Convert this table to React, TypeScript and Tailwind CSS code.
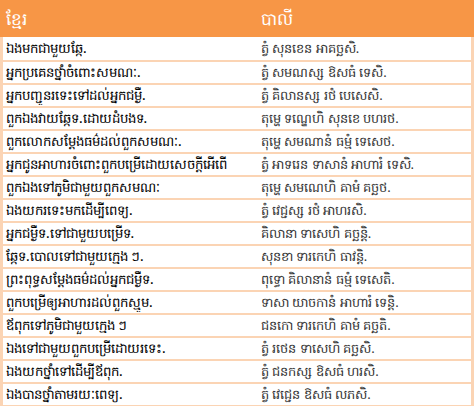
const rows: [string, string][] = [
  ["ឯងមកជាមួយឆ្កែ.", "ត្វំ សុនខេន អាគច្ឆសិ."],
  ["អ្នកប្រគេនថ្នាំចំពោះសមណៈ.", "ត្វំ សមណស្ស ឱសធំ ទេសិ."],
  ["អ្នកបញ្ជូនរទេះទៅដល់អ្នកជម្ងឺ.", "ត្វំ គិលានស្ស រថំ បេសេសិ."],
  ["ពួកឯងវាយឆ្កែទ.ដោយដំបងទ.", "តុម្ហេ ទណ្ឌេហិ សុនខេ បហរថ."],
  ["ពួកលោកសម្តែងធម៌ដល់ពួកសមណៈ.", "តុម្ហេ សមណានំ ធម្មំ ទេសេថ."],
  ["អ្នកជូនអាហារចំពោះពួកបម្រើដោយសេចក្តីអើពើ", "ត្វំ អាទរេន ទាសានំ អាហារំ ទេសិ."],
  ["ពួកឯងទៅភូមិជាមួយពួកសមណៈ", "តុម្ហេ សមណេហិ គាមំ គច្ឆថ."],
  ["ឯងយករទេះមកដើម្បីពេទ្យ.", "ត្វំ វេជ្ជស្ស រថំ អាហរសិ."],
  ["អ្នកជម្ងឺទ.ទៅជាមួយបម្រើទ.", "គិលានា ទាសេហិ គច្ឆន្តិ."],
  ["ឆ្កែទ.បោលទៅជាមួយក្មេង ៗ.", "សុនខា ទារកេហិ ធាវន្តិ."],
  ["ព្រះពុទ្ធសម្តែងធម៌ដល់អ្នកជម្ងឺទ.", "ពុទ្ធោ គិលានានំ ធម្មំ ទេសេតិ."],
  ["ពួកបម្រើឲ្យអាហារដល់ពួកស្មូម.", "ទាសា យាចកានំ អាហារំ ទេន្តិ."],
  ["ឪពុកទៅភូមិជាមួយក្មេង ៗ", "ជនកោ ទារកេហិ គាមំ គច្ឆតិ."],
  ["ឯងទៅជាមួយពួកបម្រើដោយរទេះ.", "ត្វំ រថេន ទាសេហិ គច្ឆសិ."],
  ["ឯងយកថ្នាំទៅដើម្បីឪពុក.", "ត្វំ ជនកស្ស ឱសធំ ហរសិ."],
  ["ឯងបានថ្នាំតាមរយៈពេទ្យ.", "ត្វំ វេជ្ជេន ឱសធំ លភសិ."],
]

export default function App() {
  return (
    <div className="w-[474px] h-[406px] bg-white overflow-hidden font-['Noto_Sans','Liberation_Sans',sans-serif]">
      {/* Header */}
      <div className="h-[37px] bg-[#f79646] flex items-center text-white text-[17px]">
        <div className="w-[255px] pl-[6px]">ខ្មែរ</div>
        <div className="flex-1 pl-[6px]">បាលី</div>
      </div>

      {/* Body */}
      <div className="border-x-[3px] border-b-[2px] border-[#fbd4b4]">
        {rows.map(([kh, pali], i) => (
          <div
            key={i}
            className={
              "h-[23px] flex items-center text-[13px] " +
              (i > 0 ? "border-t-[2px] border-[#fbd4b4]" : "")
            }
          >
            <div className="w-[252px] pl-[3px] whitespace-nowrap overflow-hidden text-[13.3px] text-black font-medium">{kh}</div>
            <div className="flex-1 pl-[6px] whitespace-nowrap overflow-hidden text-[#333]">{pali}</div>
          </div>
        ))}
      </div>
    </div>
  )
}
